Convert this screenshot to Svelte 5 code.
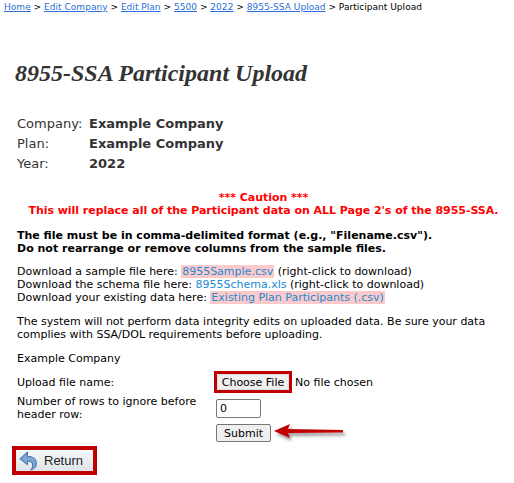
<script lang="ts">
  const crumbs = ['Home', 'Edit Company', 'Edit Plan', '5500', '2022', '8955-SSA Upload'];
  const info = [
    ['Company:', 'Example Company'],
    ['Plan:', 'Example Company'],
    ['Year:', '2022'],
  ];
</script>

<div class="page">
  <nav class="crumbs">
    {#each crumbs as c}
      <a href="#top">{c}</a>{' > '}
    {/each}Participant Upload
  </nav>

  <h1>8955-SSA Participant Upload</h1>

  <div class="info">
    {#each info as row}
      <span>{row[0]}</span><b>{row[1]}</b>
    {/each}
  </div>

  <div class="caution">
    <div>*** Caution ***</div>
    <div>This will replace all of the Participant data on ALL Page 2's of the 8955-SSA.</div>
  </div>

  <p class="strong">
    The file must be in comma-delimited format (e.g., "Filename.csv").<br />
    Do not rearrange or remove columns from the sample files.
  </p>

  <p class="downloads">
    Download a sample file here: <a class="hl" href="#top">8955Sample.csv</a> (right-click to download)<br />
    Download the schema file here: <a href="#top">8955Schema.xls</a> (right-click to download)<br />
    Download your existing data here: <a class="hl" href="#top">Existing Plan Participants (.csv)</a>
  </p>

  <p class="note">
    The system will not perform data integrity edits on uploaded data. Be sure your data complies with SSA/DOL requirements before uploading.
  </p>

  <div class="company">Example Company</div>

  <div class="form">
    <label for="file">Upload file name:</label>
    <div class="file-row">
      <span class="mark"><button type="button" id="file" class="btn">Choose File</button></span>
      <span>No file chosen</span>
    </div>
    <label for="rows">Number of rows to ignore before header row:</label>
    <div><input id="rows" type="text" value="0" /></div>
    <div></div>
    <div class="submit-row">
      <button type="button" class="btn">Submit</button>
      <svg class="arrow" width="74" height="20" viewBox="0 0 74 20" aria-hidden="true">
        <defs>
          <filter id="sh" x="-10%" y="-50%" width="120%" height="220%">
            <feDropShadow dx="2" dy="3" stdDeviation="1.5" flood-color="#000" flood-opacity="0.4" />
          </filter>
        </defs>
        <path d="M1 8 L17 1 L15 6 L70 7 L70 9.5 L15 10 L17 15 Z" fill="#c00000" filter="url(#sh)" />
      </svg>
    </div>
  </div>

  <span class="return-mark">
    <button type="button" class="return">
      <svg width="19" height="20" viewBox="0 0 18 19" aria-hidden="true">
        <path d="M8 1 L1 7.5 L8 13 L8 9.5 C11.5 9.5 13 11 13 13.5 C13 15.5 12.5 17 11 18 C14.5 17.5 16.5 14.5 16.5 11.5 C16.5 7.5 13 5 8 5 Z" fill="#7ea6d4" stroke="#4a76ad" stroke-width="1" stroke-linejoin="round" />
      </svg>
      Return
    </button>
  </span>
</div>

<style>
  :global(body) {
    margin: 0;
    background: #fff;
  }
  .page {
    width: 514px;
    height: 483px;
    overflow: hidden;
    box-sizing: border-box;
    padding: 0 4px;
    font-family: "DejaVu Sans", Verdana, sans-serif;
    font-size: 11px;
    line-height: 13px;
    color: #000;
  }
  .crumbs {
    padding-top: 1px;
    font-size: 9px;
    line-height: 13px;
    letter-spacing: 0.03px;
    white-space: nowrap;
  }
  .crumbs a {
    color: #2a6fdb;
  }
  h1 {
    margin: 45px 0 0 11px;
    font-family: "Liberation Serif", "Times New Roman", serif;
    font-style: italic;
    font-weight: bold;
    font-size: 24px;
    line-height: 28px;
    color: #333;
  }
  .info {
    display: grid;
    grid-template-columns: 72px auto;
    justify-content: start;
    margin: 27px 0 0 13px;
    font-size: 13px;
    line-height: 20px;
    color: #333;
  }
  .caution {
    margin: 17px 0 0 13px;
    text-align: center;
    color: #f00;
    font-weight: bold;
    letter-spacing: -0.04px;
  }
  p {
    margin: 0 0 0 13px;
  }
  .strong {
    margin-top: 12px;
    font-weight: bold;
  }
  .downloads {
    margin-top: 10px;
  }
  .downloads a {
    color: #1b8ad3;
    text-decoration: none;
  }
  .hl {
    background: #fccaca;
    padding: 0 1px;
  }
  .note {
    margin-top: 11px;
  }
  .company {
    margin: 11px 0 0 13px;
  }
  .form {
    display: grid;
    grid-template-columns: 199px auto;
    margin-left: 13px;
    margin-top: 6px;
    align-items: center;
  }
  .form label {
    display: block;
    padding: 2px 0;
  }
  .file-row {
    display: flex;
    align-items: center;
    gap: 3px;
  }
  .mark {
    display: inline-block;
    margin-left: -2px;
    border: 3px solid #c00000;
    line-height: 0;
  }
  .btn {
    font-family: "DejaVu Sans", Verdana, sans-serif;
    font-size: 11px;
    height: 18px;
    padding: 0 7px;
    background: #efefef;
    border: 1px solid #767676;
    border-radius: 2px;
    color: #000;
  }
  .mark .btn {
    height: 16px;
    width: 72px;
    padding: 0;
    border-color: #ddd;
  }
  input {
    width: 45px;
    height: 19px;
    box-sizing: border-box;
    border: 1px solid #767676;
    border-radius: 2px;
    font-family: "DejaVu Sans", sans-serif;
    font-size: 11px;
    padding: 0 3px;
  }
  .submit-row {
    display: flex;
    align-items: center;
  }
  .arrow {
    margin-left: 2px;
  }
  .return-mark {
    display: inline-block;
    margin: 3px 0 0 8px;
    border: 4px solid #c00000;
    line-height: 0;
  }
  .return {
    display: flex;
    align-items: center;
    gap: 6px;
    width: 77px;
    height: 21px;
    padding: 0 0 0 3px;
    border: 0;
    background: linear-gradient(#f6f8f9, #dfe4e8);
    font-family: "Liberation Sans", Arial, sans-serif;
    font-size: 13px;
    color: #222;
  }
</style>
